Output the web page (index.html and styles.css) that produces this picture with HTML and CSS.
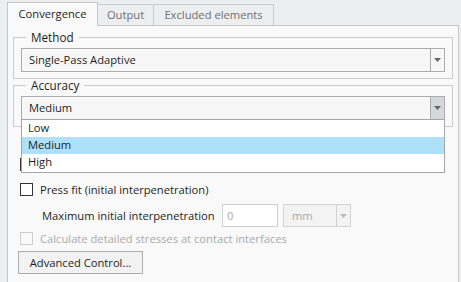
FILE: index.html
```html
<!DOCTYPE html>
<html>
<head>
<meta charset="utf-8">
<link rel="stylesheet" href="styles.css">
</head>
<body>
<div class="tabs">
  <div class="tab active">Convergence</div>
  <div class="tab t-output">Output</div>
  <div class="tab t-excl">Excluded elements</div>
</div>
<div class="panel">
  <fieldset class="group">
    <legend>Method</legend>
    <div class="combo">
      <span class="combo-text">Single-Pass Adaptive</span>
      <span class="combo-btn"><svg width="7" height="4" viewBox="0 0 7 4"><polygon points="0,0 7,0 3.5,4" fill="#666"/></svg></span>
    </div>
  </fieldset>
  <fieldset class="group group-acc">
    <legend>Accuracy</legend>
    <div class="combo combo-open">
      <span class="combo-text">Medium</span>
      <span class="combo-btn hover"><svg width="7" height="4" viewBox="0 0 7 4"><polygon points="0,0 7,0 3.5,4" fill="#666"/></svg></span>
      <ul class="popup">
        <li>Low</li>
        <li class="sel">Medium</li>
        <li>High</li>
      </ul>
    </div>
  </fieldset>
  <div class="check-row first"><span class="cb"></span></div>
  <div class="check-row"><span class="cb"></span><span>Press fit (initial interpenetration)</span></div>
  <div class="field-row">
    <span class="field-label">Maximum initial interpenetration</span>
    <span class="input">0</span>
    <span class="combo unit"><span class="combo-text">mm</span><span class="combo-btn"><svg width="7" height="4" viewBox="0 0 7 4"><polygon points="0,0 7,0 3.5,4" fill="#bbb"/></svg></span></span>
  </div>
  <div class="check-row disabled"><span class="cb"></span><span>Calculate detailed stresses at contact interfaces</span></div>
  <div class="btn-row"><span class="button">Advanced Control...</span></div>
</div>
</body>
</html>
```
FILE: styles.css
```css
html, body {
  margin: 0;
  padding: 0;
}
body {
  background: #edeef0;
  font-family: "Open Sans", "Noto Sans", sans-serif;
  font-size: 11.2px;
  color: #1e1e1e;
  width: 461px;
  height: 282px;
  overflow: hidden;
}
.tabs {
  display: flex;
  align-items: flex-end;
  height: 25px;
  padding-left: 7px;
}
.tab {
  box-sizing: border-box;
  height: 21px;
  border-top: 1px solid #cacbcd;
  border-right: 1px solid #cacbcd;
  background: #eceef0;
  color: #707070;
  display: flex;
  align-items: center;
  justify-content: center;
  padding-bottom: 1px;
}
.tab.active {
  position: relative;
  z-index: 1;
  height: 24px;
  margin-bottom: -1px;
  border-left: 1px solid #c6c6c6;
  border-top: 1px solid #c6c6c6;
  border-right: 1px solid #c6c6c6;
  background: #f9f9f9;
  color: #1e1e1e;
  width: 91px;
  padding-bottom: 2px;
}
.t-output { width: 56px; }
.t-excl { width: 120px; }

.panel {
  box-sizing: border-box;
  margin-left: 7px;
  width: 452px;
  height: 257px;
  border: 1px solid #c6c6c6;
  border-bottom: none;
  background: #f9f9f9;
  display: flex;
  flex-direction: column;
}
.group {
  margin: 5px 5px 0;
  padding: 5px 7px 6px;
  border: 1px solid #cbcbcb;
  min-width: 0;
}
.group-acc {
  margin-top: 0;
}
.group legend {
  margin-left: 5px;
  padding: 0 5px;
  line-height: 12px;
  font-size: 11.7px;
  color: #1e1e1e;
}
.combo {
  position: relative;
  box-sizing: border-box;
  height: 24px;
  border: 1px solid #acacac;
  background: #f7f7f7;
  display: flex;
  align-items: stretch;
}
.combo-text {
  flex: 1;
  padding-left: 7px;
  display: flex;
  align-items: center;
  padding-bottom: 1px;
}
.combo-btn {
  width: 13px;
  border-left: 1px solid #acacac;
  display: flex;
  align-items: center;
  justify-content: center;
}
.combo-btn.hover {
  background: #d5d8da;
}
.popup {
  position: absolute;
  z-index: 5;
  left: -1px;
  right: -1px;
  top: 22px;
  margin: 0;
  padding: 0 0 1px;
  list-style: none;
  background: #fff;
  border: 1px solid #a6a6a6;
}
.popup li {
  height: 17px;
  line-height: 16px;
  padding-left: 6px;
}
.popup li.sel {
  background: #aee0fa;
}
.check-row {
  display: flex;
  align-items: center;
  height: 17px;
  margin-top: 8px;
  padding-left: 12px;
  gap: 7px;
}
.check-row.first {
  margin-top: 29px;
}
.cb {
  box-sizing: border-box;
  width: 13px;
  height: 13px;
  border: 1px solid #333;
  background: #fff;
}
.check-row.disabled {
  margin-top: 3px;
  color: #a9a9a9;
}
.check-row.disabled .cb {
  border-color: #cdcdcd;
  background: #f9f9f9;
}
.field-row {
  display: flex;
  align-items: center;
  margin-top: 6px;
  padding-left: 34px;
  height: 23px;
}
.field-label {
  width: 180px;
}
.input {
  box-sizing: border-box;
  width: 56px;
  height: 23px;
  border: 1px solid #cfcfcf;
  background: #fff;
  color: #aaa;
  padding-left: 4px;
  display: flex;
  align-items: center;
}
.combo.unit {
  width: 68px;
  height: 23px;
  margin-left: 5px;
  border-color: #d3d3d3;
  background: #f3f3f3;
  color: #a8a8a8;
}
.combo.unit .combo-text {
  padding-left: 8px;
}
.combo.unit .combo-btn {
  border-left-color: #d3d3d3;
}
.btn-row {
  display: flex;
  margin-top: 4px;
  padding-left: 10px;
}
.button {
  box-sizing: border-box;
  width: 125px;
  height: 23px;
  border: 1px solid #adadad;
  background: #f2f2f2;
  display: flex;
  align-items: center;
  justify-content: center;
}
```
